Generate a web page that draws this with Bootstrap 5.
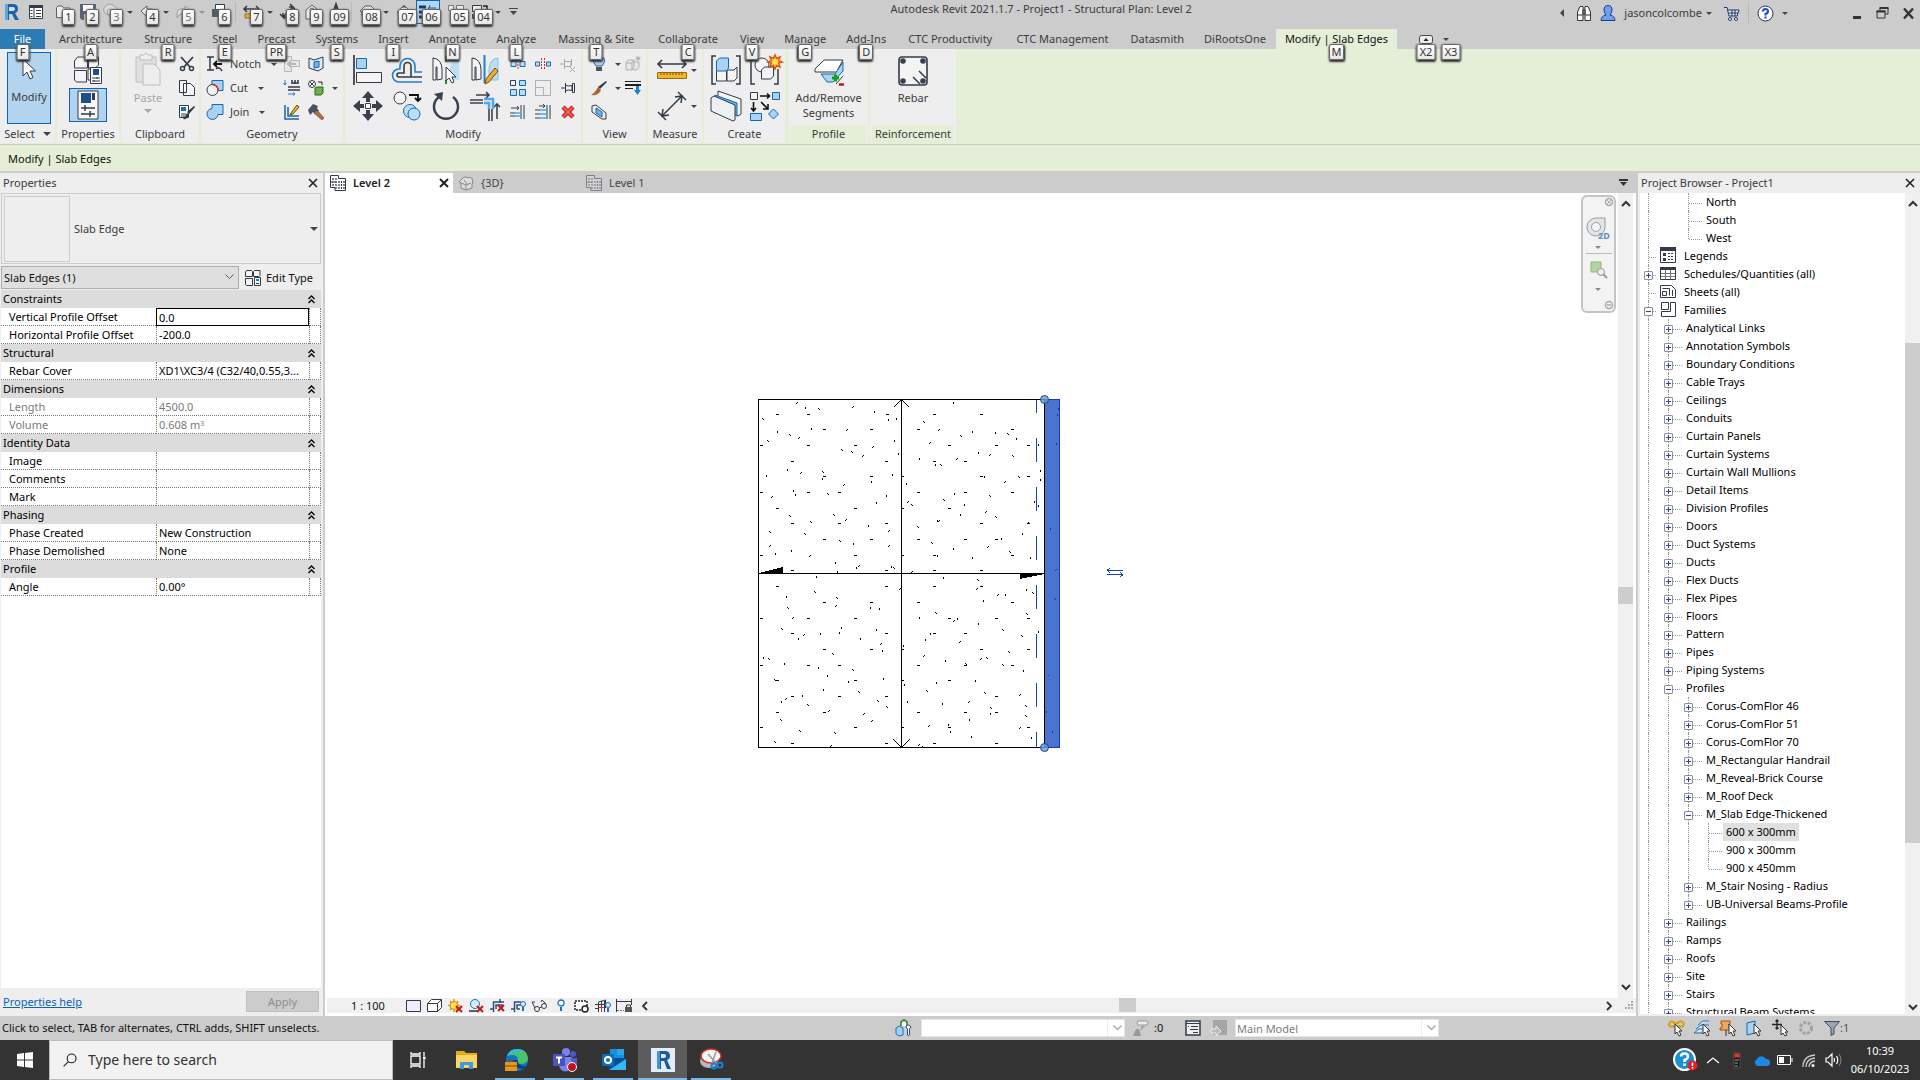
<!DOCTYPE html>
<html lang="en">
<head>
<meta charset="utf-8">
<meta name="viewport" content="width=device-width, initial-scale=1">
<title>Autodesk Revit 2021.1.7 - Project1 - Structural Plan: Level 2</title>
<link href="https://cdn.jsdelivr.net/npm/bootstrap@5.3.0/dist/css/bootstrap.min.css" rel="stylesheet">
<style>
:root{--chrome:#ccc;--panel:#eee;--ctx:#e5efd7;--ink:#3b3b3b;--blue:#0a67b8}
body{font-family:"Noto Sans","Open Sans",sans-serif;font-size:11px;line-height:18px;color:#1e1e1e;background:var(--chrome)}
button,input,select{font:inherit;color:inherit;border:0;background:none;padding:0;border-radius:0;min-width:0}
a{color:inherit;text-decoration:none}
svg{display:block;flex:none;overflow:visible}
.caret-d{width:0;height:0;border:4px solid transparent;border-top-color:#444;border-bottom:0;flex:none}
.caret-d.tiny{border-width:3px 3px 0}
.dim{opacity:.4}
/* title bar */
.titlebar{height:29px;color:var(--ink)}
.qat{height:24px}
.qat button{width:24px;height:24px;position:relative;display:flex;align-items:center;justify-content:center}
.qat .drop{width:12px}
.qat .more{width:18px}
.qat .sel{background:#b4d5f1;outline:1px solid var(--blue);outline-offset:-1px}
.bar-sep{width:1px;height:20px;background:#b8b8b8;margin:2px 4px 2px 3px}
.keytip{position:absolute;left:10px;top:9px;min-width:13px;height:16px;padding:0 2px;line-height:14px;background:linear-gradient(#fff,#e6e6e6);border:1px solid #666;border-radius:2px;box-shadow:0 2px 2px #333,0 0 2px #777;color:#333;text-align:center;z-index:3}
.keytip.wide{left:6px;min-width:19px}
.user-area{height:26px}
.user-area .bar-sep{margin:0}
.user-name{margin-right:-4px}
.win-buttons{height:26px;gap:14px;padding:0 6px 0 65px}
/* ribbon tabs */
.ribbon-tabs{height:20px}
.rtab{position:relative;padding:0 10px;line-height:20px;color:var(--ink);white-space:nowrap}
.tabset{width:1229px;margin-left:2px}
.tabset .rtab{flex:1 1 auto;text-align:center;padding:0 9px}
.tabset .rtab.long{flex-grow:3}
.file-tab{background:#2b7bb4;color:#fff;width:45px;text-align:center;padding:0}
.ctx-tab{background:var(--ctx);width:121px;text-align:center;padding:0;color:#111}
.rtab .keytip{left:50%;top:15px;transform:translateX(-50%)}
.rtab.minrib{margin-left:12px}
.rtab .keytip.x3{left:8px}
/* ribbon */
.ribbon{background:var(--ctx);height:96px;border-bottom:1px solid #c6ccc0;color:var(--ink)}
.rpanel{background:var(--panel);border-right:2px solid var(--ctx);height:94px;display:flex;flex-direction:column}
.rbody{height:76px;padding-top:3px;display:flex;align-items:flex-start}
.rlabel{height:18px;text-align:center;line-height:18px}
.ctx-panel .rlabel{background:var(--ctx);margin:0 2px}
.p57{width:57px}.p64{width:64px}.p80{width:80px}.p144{width:144px}.p238{width:238px}.p65{width:65px}.p56{width:56px}.p83{width:83px}.p88{width:88px}
.rpanel.first-ctx{border-left:2px solid var(--ctx)}
.rbody button{display:flex;align-items:center;justify-content:center}
.rbody .big{flex-direction:column;height:72px;justify-content:flex-start;line-height:15px}
.s24{width:24px;height:24px}
.l39{width:39px;height:36px}
.grid-s{display:grid;grid-template-columns:repeat(3,25px);grid-auto-rows:24px;margin-left:1px}
.grid-l{display:grid;grid-template-columns:repeat(4,39px);grid-auto-rows:36px;margin-left:3px}
.grid-l.two{grid-template-columns:repeat(2,39px);margin-left:2px}
.grid-l button,.grid-s button{width:100%;height:100%}
.modify-btn{width:44px;margin-left:7px;background:#b3d4ef;border:1px solid var(--blue);padding-top:4px}
.prop-btn{width:38px;height:34px;background:#b3d4ef;border:1px solid var(--blue)}
.paste-btn{width:46px}
.geo-list{width:79px;padding-left:4px}
.rbody .gtxt{height:24px;gap:6px;padding-left:1px;justify-content:flex-start}
.optbar{background:var(--ctx);height:26px;padding-left:8px;line-height:28px;color:#111}
/* workspace */
.workspace{padding-top:2px;min-height:0}
.palette{background:var(--panel);color:var(--ink)}
.palette-head{height:20px;line-height:22px;padding:0 5px 0 3px;flex:none}
.props{width:323px}
.typebox{height:71px;margin:0 2px 0 1px;border:1px solid #ccc;padding:2px}
.thumb{width:66px;height:66px;border:1px solid #ccc}
.filter-row{height:26px;padding:2px 0 1px 1px}
.fake-select{appearance:none;-webkit-appearance:none;background:#dfdfdf;border:1px solid #adadad;padding:0 2px;height:23px;width:238px;color:#111}
.sel-wrap{position:relative}
.sel-wrap svg{position:absolute;right:5px;top:8px;pointer-events:none}
.edit-type{gap:5px;margin-left:6px;color:#111}
.prop-area{background:#fff;margin:0 2px 0 1px}
.prop-grid{table-layout:fixed;width:320px;color:#000;border-collapse:separate;border-spacing:0}
.prop-grid .c-name{width:155px}
.prop-grid .c-btn{width:12px}
.prop-grid td,.prop-grid th{padding:0;line-height:17px;height:18px;font-weight:400;white-space:nowrap;overflow:hidden}
.prop-grid .grp th{background:#dcdcdc;padding:0 6px 0 2px;line-height:18px}
.prop-grid .itm th{padding-left:8px;border-bottom:1px dotted #777}
.prop-grid .itm label,.prop-grid .itm output{display:block;height:17px}
.prop-grid .itm td{border-bottom:1px dotted #777;border-left:1px dotted #777;padding-left:2px}
.prop-grid .itm td:last-child{border-right:1px dotted #777}
.prop-grid input{width:100%;display:block;height:17px}
.prop-grid .itm td.edit{padding:0;border:1px solid #000}
.prop-grid td.edit input{padding-left:2px;height:16px}
.prop-grid .ro{color:#7a7a7a}
.prop-grid sup{font-size:7px;line-height:1}
.prop-foot{height:28px;padding:3px 4px 4px 3px}
.prop-foot a{color:#0563c1;text-decoration:underline}
.apply-btn{width:73px;height:21px;background:#ccc;border:1px solid #bfbfbf;color:#8b8b8b}
.viewpane{margin:0 2px;background:#fff;min-width:0}
.viewtabs{height:20px;background:var(--chrome);line-height:22px;color:#444}
.vtab{width:128px;padding-left:5px;gap:7px}
.vtab.act{background:#fff;font-weight:600;color:#222}
.vscroll{width:15px;background:#f0f0f0;margin-right:3px}
.tree-area .vscroll{margin-right:0}
.thumb-bar{background:#cdcdcd}
.thumb-bar.plan-v{height:17px;margin-top:380px}
.thumb-bar.plan-h{width:17px;height:14px;margin-right:6px}
.thumb-bar.tree-v{height:500px;margin-top:136px}
.viewctl{height:15px;background:#f0f0f0;margin:0 0 3px 2px;color:#111;line-height:15px}
.viewctl .ic{width:21px;display:flex;justify-content:center}
.scale{padding-left:24px;width:76px;text-align:left}
.grip{margin:0 3px 0 12px}
.navbox{position:absolute;right:2px;top:2px;width:35px;height:118px;border:2px solid #c4c4c4;border-radius:6px;background:#f3f3f3}
.browser{width:282px}
.tree-area{background:#fff;margin:0 0 2px 2px;color:#000;min-height:0}
.tree{overflow:hidden;min-width:0}
.trow{height:18px;display:flex;white-space:nowrap}
.guide,.node{width:20px;height:18px;position:relative;flex:none}
.node{width:26px}
.node.root{width:20px}
.vl::before{content:"";position:absolute;left:8px;top:0;bottom:0;border-left:1px dotted #999}
.vl.half::before{bottom:8px}
.node::after{content:"";position:absolute;left:9px;right:4px;top:10px;border-top:1px dotted #999}
.box{position:absolute;left:4px;top:6px;width:9px;height:9px;border:1px solid #919191;border-radius:1px;background:#fafafa;z-index:1}
.box::before{content:"";position:absolute;left:1px;top:3px;width:5px;height:1px;background:#2b4a9b}
.box.plus::after{content:"";position:absolute;left:3px;top:1px;width:1px;height:5px;background:#2b4a9b}
.tsel{background:#e0e0e0;margin-left:-3px;padding:0 3px}
/* status bar */
.status{height:24px;color:#111;line-height:24px}
.status .fake-select{background:#fff;border:1px solid #e6e6e6;height:18px;width:204px;line-height:15px;padding:0 1px;color:#7d7d7d}
.status .sel-wrap svg{top:6px;right:3px}
.status .sel-wrap::after{content:"";position:absolute;right:17px;top:1px;height:16px;border-left:1px solid #eee}
.hint{width:895px;padding-left:2px}
.zero{width:36px;padding-left:5px}
.opt-icon{margin:0 8px 0 10px}
.seltools{gap:10px}
.sel-count{width:80px;color:#555}
/* taskbar */
.taskbar{height:40px;background:#333;color:#fff}
.app{width:49px;height:40px;display:flex;align-items:center;justify-content:center;position:relative}
.app.run::after{content:"";position:absolute;left:4px;right:5px;bottom:0;height:2px;background:#76b9ed}
.app.cur{background:#5c5c5c}
.app.cur::after{left:0;right:0}
.search{width:344px;background:#f2f2f2;border:1px solid #bbb;color:#333}
.search input{font-size:14px;width:250px;margin-left:10px}
.search input::placeholder{color:#333;opacity:1}
.tray{margin-right:5px}
.tray-ic{width:24px;display:flex;justify-content:center}
.tray-ic.help{width:28px;justify-content:flex-start}
.clock{width:70px;text-align:center;line-height:18px}
</style>
</head>
<body class="vh-100 d-flex flex-column overflow-hidden">

<header class="titlebar d-flex align-items-start flex-shrink-0">
  <div class="qat d-flex">
    <button aria-label="Revit"><svg width="16" height="18" viewBox="0 0 16 18"><path fill="#1b63a8" d="M1 1h8q5 0 5 5 0 3-3 4l4 7h-4L8 11H5v6H1z"/><path fill="#cfe0ee" d="M5 4h4q2 0 2 2t-2 2H5z"/><path fill="#5ea5dd" d="M1 1h3v16H1z"/></svg></button>
    <button aria-label="Home"><svg width="14" height="14" viewBox="0 0 14 14"><path fill="#fff" stroke="#333b48" d="M.5 .5h13v13H.5z"/><path stroke="#333b48" d="M0 2h14M5 3v11M7 5.500h5M7 8.500h5M7 11.500h5" fill="none"/><path fill="#333b48" d="M0 0h14v3H0z"/><path fill="#333b48" d="M1.500 5h2v1h-2zm0 3h2v1h-2zm0 3h2v1h-2z"/></svg></button>
    <button class="ms-1" aria-label="Open"><svg width="16" height="14" viewBox="0 0 16 14"><path fill="#eee" stroke="#555d68" d="M.5 12.500V2.500L2 1h4l1.500 2H14v3l-3 7z"/></svg><span class="keytip">1</span></button>
    <button aria-label="Save"><svg width="16" height="16" viewBox="0 0 16 16"><path fill="#5a6370" d="M0 0h16v16H2l-2-2z"/><path fill="#fff" d="M3 1h10v6H3z"/><path fill="#b9c2cc" d="M4 10h8v6H4z"/></svg><span class="keytip">2</span></button>
    <button aria-label="Synchronize"><svg class="dim" width="18" height="16" viewBox="0 0 18 16"><path fill="#eee" stroke="#666" d="M1 8a6 6 0 0 1 10-6l5 4v6l-6 3z"/><circle cx="7" cy="8" r="3" fill="none" stroke="#666"/></svg><span class="keytip text-secondary">3</span></button>
    <button class="drop" aria-label="Synchronize menu"><span class="caret-d tiny"></span></button>
    <button aria-label="Undo"><svg width="16" height="14" viewBox="0 0 16 14"><path fill="#eee" stroke="#555d68" d="M1 6l6-5v3h4q4 0 4 5v4q-2-4-4-4H7v3z"/></svg><span class="keytip">4</span></button>
    <button class="drop" aria-label="Undo menu"><span class="caret-d tiny"></span></button>
    <button aria-label="Redo"><svg class="dim" width="16" height="14" viewBox="0 0 16 14"><path fill="#eee" stroke="#555d68" d="M15 6L9 1v3H5Q1 4 1 9v4q2-4 4-4h4v3z"/></svg><span class="keytip text-secondary">5</span></button>
    <button class="drop" aria-label="Redo menu"><span class="caret-d tiny dim"></span></button>
    <button aria-label="Print"><svg width="16" height="16" viewBox="0 0 16 16"><path fill="#fff" stroke="#333b48" d="M3.500 .5h9v5h-9z"/><path fill="#555d68" d="M0 5h16v8H0z"/></svg><span class="keytip">6</span></button>
    <span class="bar-sep"></span>
    <button aria-label="Measure"><svg width="16" height="14" viewBox="0 0 16 14"><path fill="none" stroke="#333b48" stroke-width="1.500" d="M0 4h15M3 1L0 4l3 3M12 1l3 3-3 3"/><path fill="#f0b030" stroke="#a36a00" d="M1 9h13v4H1z"/></svg><span class="keytip">7</span></button>
    <button class="drop" aria-label="Measure menu"><span class="caret-d tiny"></span></button>
    <button aria-label="Aligned Dimension"><svg width="16" height="16" viewBox="0 0 16 16"><path fill="none" stroke="#333b48" stroke-width="1.500" d="M3 13L13 3M10 0l5 5M0 10l5 5M3 9v4h4M9 3h4v4"/></svg><span class="keytip">8</span></button>
    <button aria-label="Tag by Category"><svg width="16" height="16" viewBox="0 0 16 16"><path fill="#eee" stroke="#555d68" d="M2 15V6l6-5 6 5v9z"/><circle cx="8" cy="6" r="2" fill="#fff" stroke="#555d68"/></svg><span class="keytip">9</span></button>
    <button aria-label="Text"><svg width="14" height="16" viewBox="0 0 14 16"><path fill="none" stroke="#333b48" stroke-width="3" d="M2 16L7 2l5 14M4 11h6"/></svg><span class="keytip wide">09</span></button>
    <span class="bar-sep"></span>
    <button aria-label="Default 3D View"><svg width="18" height="16" viewBox="0 0 18 16"><path fill="#eee" stroke="#555d68" d="M1 7l5-5 6 0 5 5-3 1v6H5L3 12V8z"/></svg><span class="keytip wide">08</span></button>
    <button class="drop" aria-label="3D menu"><span class="caret-d tiny"></span></button>
    <button aria-label="Section"><svg width="16" height="16" viewBox="0 0 16 16"><path fill="#333b48" d="M8 1l7 7-3 4-8 0-3-4z"/><circle cx="8" cy="8" r="5" fill="#fff" stroke="#555d68"/></svg><span class="keytip wide">07</span></button>
    <button class="sel" aria-label="Thin Lines"><svg width="18" height="14" viewBox="0 0 18 14"><path fill="none" stroke="#173a63" stroke-width="3" d="M0 2h7M0 7h6M0 12h6"/><path fill="none" stroke="#0a67b8" d="M9 3h8M8 8l3-8"/></svg><span class="keytip wide">06</span></button>
    <span class="ms-1"></span>
    <button aria-label="Close Inactive"><svg width="16" height="14" viewBox="0 0 16 14"><path fill="#eee" stroke="#777" d="M.5 .5h5v5h-5zM8.500 .5h7v6h-7zM4.500 8.500h11v5h-11z"/></svg><span class="keytip wide">05</span></button>
    <button aria-label="Switch Windows"><svg width="16" height="14" viewBox="0 0 16 14"><path fill="#eee" stroke="#333b48" d="M.5 .5h9v6h-9zM6.500 6.500h9v7h-9z"/><path fill="none" stroke="#222" stroke-width="1.500" d="M11 1h4v4M1 9v4h4"/></svg><span class="keytip wide">04</span></button>
    <button class="drop" aria-label="Windows menu"><span class="caret-d tiny"></span></button>
    <button class="more" aria-label="Customize"><svg width="9" height="8" viewBox="0 0 9 8"><path fill="#444" d="M0 0h9v1H0zM1 3h7L4.500 7z"/></svg></button>
  </div>
  <div class="flex-fill text-center">Autodesk Revit 2021.1.7 - Project1 - Structural Plan: Level 2</div>
  <div class="user-area d-flex align-items-center gap-2">
    <svg width="4" height="8"><path fill="#444" d="M4 0v8L0 4z"/></svg>
    <svg class="ms-1" width="16" height="16" viewBox="0 0 16 16"><path fill="#fff" stroke="#333" d="M1.500 15.500V7L4 1.500h3V15.500zM14.500 15.500V7L12 1.500H9V15.500zM7 5h2v4H7zM1.500 10h5.500M9 10h5.500"/></svg>
    <svg width="16" height="16" viewBox="0 0 16 16"><path fill="#6fa0ee" stroke="#1f3d8c" d="M8 .5q4 0 4 4.500 0 3-2 5 5 1 5 5.500H1Q1 11 6 10 4 8 4 5 4 .5 8 .5z"/></svg>
    <span class="user-name">jasoncolcombe</span><span class="caret-d tiny"></span>
    <svg class="ms-1" width="16" height="15" viewBox="0 0 16 15"><path fill="#eee" stroke="#1d3566" d="M0 1.500h3l2 8.500h8l2-6H4M5 7h9M8 4v6M11 4v6"/><circle cx="6" cy="13" r="1.500" fill="#fff" stroke="#1d3566"/><circle cx="12" cy="13" r="1.500" fill="#fff" stroke="#1d3566"/></svg>
    <span class="bar-sep"></span>
    <svg width="17" height="17" viewBox="0 0 17 17"><circle cx="8.500" cy="8.500" r="7.500" fill="#fff" stroke="#222d55"/><path fill="none" stroke="#1f4fc0" stroke-width="2.200" d="M6 6.500Q6 4 8.500 4T11 6.500Q11 8 8.500 9v1.500M8.500 11.500v2"/></svg>
    <span class="caret-d tiny"></span>
  </div>
  <div class="win-buttons d-flex align-items-center">
    <button aria-label="Minimize"><svg width="9" height="14"><path fill="#333" d="M0 10h8v3H0z"/></svg></button>
    <button aria-label="Restore"><svg width="13" height="12" viewBox="0 0 13 12"><path fill="none" stroke="#333" d="M4 3V1h8v6H9M1 4h8v7H1z"/><path stroke="#333" stroke-width="2" d="M3.500 1h9M.5 4.500h9"/></svg></button>
    <button aria-label="Close"><svg width="11" height="11" viewBox="0 0 11 11"><path stroke="#333" stroke-width="2.400" d="M1 .5l9 10M10 .5l-9 10"/></svg></button>
  </div>
</header>

<nav class="ribbon-tabs d-flex flex-shrink-0">
  <a href="#" class="rtab file-tab">File<span class="keytip">F</span></a>
  <div class="tabset d-flex">
    <a href="#" class="rtab long">Architecture<span class="keytip">A</span></a>
    <a href="#" class="rtab">Structure<span class="keytip">R</span></a>
    <a href="#" class="rtab">Steel<span class="keytip">E</span></a>
    <a href="#" class="rtab">Precast<span class="keytip wide">PR</span></a>
    <a href="#" class="rtab">Systems<span class="keytip">S</span></a>
    <a href="#" class="rtab">Insert<span class="keytip">I</span></a>
    <a href="#" class="rtab">Annotate<span class="keytip">N</span></a>
    <a href="#" class="rtab">Analyze<span class="keytip">L</span></a>
    <a href="#" class="rtab long">Massing &amp; Site<span class="keytip">T</span></a>
    <a href="#" class="rtab long">Collaborate<span class="keytip">C</span></a>
    <a href="#" class="rtab">View<span class="keytip">V</span></a>
    <a href="#" class="rtab">Manage<span class="keytip">G</span></a>
    <a href="#" class="rtab">Add-Ins<span class="keytip">D</span></a>
    <a href="#" class="rtab long">CTC Productivity</a>
    <a href="#" class="rtab long">CTC Management</a>
    <a href="#" class="rtab">Datasmith</a>
    <a href="#" class="rtab">DiRootsOne</a>
  </div>
  <a href="#" class="rtab ctx-tab">Modify | Slab Edges<span class="keytip">M</span></a>
  <button class="rtab d-flex align-items-center minrib" aria-label="Minimize ribbon"><svg width="14" height="9" viewBox="0 0 14 9"><rect x=".5" y=".5" width="13" height="8" rx="2" fill="#eee" stroke="#444"/><path fill="#222" d="M4.500 6h5L7 3z"/></svg><span class="keytip wide">X2</span></button>
  <button class="rtab p-0 d-flex align-items-center" aria-label="Ribbon options"><span class="caret-d tiny"></span><span class="keytip wide x3">X3</span></button>
</nav>

<section class="ribbon d-flex flex-shrink-0">
  <div class="rpanel p57"><div class="rbody">
    <button class="big modify-btn"><svg width="14" height="24" viewBox="0 0 14 24"><path fill="#fff" stroke="#333b48" d="M1 2v17l4-4 3 7 3-1.500L8 14h5.500z"/></svg><span class="pt-2">Modify</span></button></div>
    <div class="rlabel d-flex align-items-center justify-content-center gap-2">Select <span class="caret-d"></span></div></div>
  <div class="rpanel p64"><div class="rbody flex-column align-items-center">
    <button class="l39" aria-label="Type Properties"><svg width="30" height="30" viewBox="0 0 30 30"><path fill="#f4f4f4" stroke="#333b48" d="M1.500 6l3-4h8l2 2v9h-13zM15.500 4l2-2h8v8l-3 3h-7zM1.500 15.500h12V27h-10l-2-2zM15 14h5v11h-5z"/><path fill="#fff" stroke="#333b48" d="M17.500 12.500h11v16h-11z"/><path fill="#1c4f8e" d="M20 14h6v6h-6z"/><path stroke="#333b48" d="M19 23h8M19 26h8M24 22v2M21 25v2"/></svg></button>
    <button class="prop-btn" aria-label="Properties"><svg width="22" height="30" viewBox="0 0 22 30"><path fill="#f8f8f8" stroke="#333b48" d="M1 1h20v28H1z"/><path fill="#1c4f8e" d="M4 3h10v10H4z"/><path fill="#333b48" d="M15 3h3v7h-3z"/><path stroke="#333b48" stroke-width="1.500" d="M4 18h14M4 24h14M8 15v6M13 21v6"/></svg></button></div>
    <div class="rlabel">Properties</div></div>
  <div class="rpanel p80"><div class="rbody">
    <button class="big dim mx-1 paste-btn"><svg width="26" height="34" viewBox="0 0 26 34"><path fill="#ccc" stroke="#777" d="M1 5h20v25H1z"/><path fill="#eee" stroke="#777" d="M5 8V3h4q2-4 4 0h4v5zM8 12h11l6 6v15H8z"/></svg><span class="pt-1">Paste</span><span class="caret-d mt-1"></span></button>
    <div>
      <button class="s24" aria-label="Cut"><svg width="16" height="16" viewBox="0 0 16 16"><path stroke="#333b48" stroke-width="1.800" d="M2 1l9 10M14 1L5 11"/><circle cx="3.500" cy="12.500" r="2" fill="none" stroke="#333b48" stroke-width="1.500"/><circle cx="12.500" cy="12.500" r="2" fill="none" stroke="#333b48" stroke-width="1.500"/></svg></button>
      <button class="s24" aria-label="Copy"><svg width="16" height="16" viewBox="0 0 16 16"><path fill="#f5f5f5" stroke="#333b48" d="M.5 .5h7v12h-7zM4.500 3.500h7l4 4v8h-11z"/></svg></button>
      <button class="s24" aria-label="Match Type"><svg width="16" height="16" viewBox="0 0 16 16"><path fill="#fff" stroke="#333b48" d="M.5 1.500h9v12h-9z"/><path fill="#1f6fc0" d="M2 3h5v4H2z"/><path stroke="#333b48" d="M2 10h5M2 12h4"/><path fill="#333b48" d="M15 2l1 1-6 7-2-2zM8 9l2 2q-2 5-6 4 2-2 4-6z"/></svg></button>
    </div></div><div class="rlabel">Clipboard</div></div>
  <div class="rpanel p144"><div class="rbody">
    <div class="geo-list">
      <button class="gtxt"><svg width="18" height="16" viewBox="0 0 18 16"><path fill="none" stroke="#333b48" stroke-width="1.500" d="M1 1h7M4 1v13M1 14h7M12 3h5M10 13q3-3 6 2"/><path fill="none" stroke="#111" stroke-width="1.800" d="M16 8H8M11 5L8 8l3 3"/></svg><span>Notch</span><span class="caret-d tiny ms-1"></span></button>
      <button class="gtxt"><svg width="18" height="16" viewBox="0 0 18 16"><path fill="#a8d3f2" stroke="#1468b0" d="M6 .5h11v10H6z"/><circle cx="6.500" cy="10" r="5.500" fill="#f4f4f4" stroke="#333b48"/><path fill="none" stroke="#d22" stroke-width="1.500" d="M6.500 4.500a5.500 5.500 0 0 1 5.500 6"/></svg><span>Cut</span><span class="caret-d tiny ms-1"></span></button>
      <button class="gtxt"><svg width="18" height="16" viewBox="0 0 18 16"><path fill="#a8d3f2" stroke="#1468b0" d="M6 .5h11v10h-5a5.500 5.500 0 1 1-6-6z"/></svg><span>Join</span><span class="caret-d tiny ms-1"></span></button>
    </div>
    <div>
      <button class="s24 dim" aria-label="Wall Joins"><svg width="16" height="16" viewBox="0 0 16 16"><path fill="#ddd" stroke="#666" d="M.5 .5h7v4h8v6h-8v5h-7z"/><path fill="none" stroke="#666" stroke-width="2" d="M5 8h7M7 5L4 8l3 3"/></svg></button>
      <button class="s24" aria-label="Beam Joins"><svg width="16" height="16" viewBox="0 0 16 16"><path stroke="#333b48" stroke-width="1.500" d="M4 7h12M4 10h12M8 3h6M8 0v4M14 0v4M11 0v4"/><path fill="none" stroke="#1f7fd4" d="M1 0v5M-.5 3L1 5l1.500-2M4 14h7M9 12.500l2 1.500-2 1.500"/></svg></button>
      <button class="s24" aria-label="Split Face"><svg width="16" height="16" viewBox="0 0 16 16"><path fill="none" stroke="#1468b0" stroke-width="1.500" d="M1 1v14h14M4 3v9h11"/><path fill="#f0b030" stroke="#7a4a00" d="M7 9l6-8 2 2-6 7-3 1z"/></svg></button>
    </div>
    <div>
      <button class="s24" aria-label="Wall Opening"><svg width="16" height="16" viewBox="0 0 16 16"><path fill="#dfe9f2" stroke="#333b48" d="M1 2l5 2 9-3v11l-5 3-9-3z"/><path fill="#6db4ec" stroke="#1468b0" d="M6 6l5-1v6l-5 1z"/></svg></button>
      <button class="s24" aria-label="Demolish"><svg width="16" height="16" viewBox="0 0 16 16"><circle cx="4" cy="4" r="3.500" fill="#fff" stroke="#333b48"/><path stroke="#333b48" d="M2 2l4 4M6 2L2 6"/><path fill="none" stroke="#222" d="M10 2h4v3"/><path fill="#6bb04a" stroke="#2c6315" d="M7 8l2-1h6v6l-2 2H7z"/></svg></button>
      <button class="s24" aria-label="Paint"><svg width="16" height="16" viewBox="0 0 16 16"><path fill="#4a525e" d="M0 6l5-6 5 2-1 2 2 3-4 3-2-2-3 3z"/><path fill="#b06a50" stroke="#6e3d2c" stroke-width=".6" d="M9 6l7 8-2 2-8-7z"/></svg></button>
    </div><span class="caret-d tiny align-self-center ms-1"></span></div>
    <div class="rlabel">Geometry</div></div>
  <div class="rpanel p238"><div class="rbody">
    <div class="grid-l">
      <button aria-label="Align"><svg width="30" height="30" viewBox="0 0 30 30"><path stroke="#222" stroke-width="1.500" d="M1 0v30"/><path fill="#a8d3f2" stroke="#1468b0" d="M3.500 3.500h10v10h-10z"/><path fill="#f4f4f4" stroke="#333b48" d="M3.500 17.500h25v10h-25z"/></svg></button>
      <button aria-label="Offset"><svg width="30" height="30" viewBox="0 0 30 30"><path fill="none" stroke="#1f7fd4" stroke-width="1.600" d="M30 27H7a6.500 6.500 0 0 1 0-13h1V11a7.500 7.500 0 0 1 15 0v6h7"/><path fill="none" stroke="#333b48" stroke-width="1.600" d="M30 22H7a1.500 1.500 0 0 1 0-4h5v-7a3.500 3.500 0 0 1 7 0v11"/></svg></button>
      <button aria-label="Mirror - Pick Axis"><svg width="30" height="30" viewBox="0 0 30 30"><path fill="#f4f4f4" stroke="#333b48" d="M2 3q9 1 9 12v9L6 25V12H5v13H2z"/><path stroke="#1d9a2a" stroke-width="2" d="M15 1v6m0 18v4"/><path fill="#b9def5" d="M28 3q-9 1-9 12v10h9z"/><path fill="#fff" stroke="#333b48" d="M15 12v14l3-3 3 5 2-1-2-5h4z"/></svg></button>
      <button aria-label="Mirror - Draw Axis"><svg width="30" height="30" viewBox="0 0 30 30"><path fill="#f4f4f4" stroke="#333b48" d="M2 3q9 1 9 12v9L6 25V12H5v13H2z"/><path stroke="#1f7fd4" stroke-width="2" d="M14.500 0v28"/><path fill="#b9def5" stroke="#7fc0ea" d="M28 3q-9 1-9 12v10h9z"/><path fill="#f0a830" stroke="#7a4a00" d="M16 24L25 13l3 3-9 11-4 2z"/></svg></button>
      <button aria-label="Move"><svg width="30" height="30" viewBox="0 0 30 30"><path fill="#39414e" d="M15 0l6 7h-4v4h-4V7H9zM15 30l6-7h-4v-4h-4v4H9zM0 15l7-6v4h4v4H7v4zM30 15l-7-6v4h-4v4h4v4z"/><path fill="#fff" stroke="#39414e" d="M12.500 12.500h5v5h-5z"/></svg></button>
      <button aria-label="Copy Element"><svg width="30" height="30" viewBox="0 0 30 30"><circle cx="8" cy="7" r="6" fill="#f4f4f4" stroke="#333b48"/><path fill="none" stroke="#111" stroke-width="1.800" d="M17 4h9v6M23 7l3 3 3-3"/><circle cx="18" cy="20" r="6.500" fill="#b9def5" stroke="#1468b0"/><circle cx="22" cy="23" r="6" fill="#b9def5" stroke="#1468b0"/></svg></button>
      <button aria-label="Rotate"><svg width="30" height="30" viewBox="0 0 30 30"><path fill="none" stroke="#39414e" stroke-width="2.500" d="M8 6a12 12 0 1 0 14 0"/><path fill="#39414e" d="M3 3l9-2-1 9z"/></svg></button>
      <button aria-label="Trim"><svg width="30" height="30" viewBox="0 0 30 30"><path fill="none" stroke="#39414e" stroke-width="1.600" d="M6 4h13M16 1l3 3-3 3M0 9h13M0 12h13M27 28V13M24 16l3-3 3 3M22 30V18M19 30V18"/><path fill="none" stroke="#4ba7ee" stroke-width="2.500" d="M14 8h9v10M14 12h5v6"/></svg></button>
    </div>
    <div class="grid-s">
      <button aria-label="Split"><svg width="16" height="16" viewBox="0 0 16 16"><path fill="#b9def5" stroke="#1468b0" d="M1 5.500h5v5H1zM10 5.500h5v5h-5z"/><path stroke="#d22" stroke-dasharray="2 1" d="M8 2v12"/></svg></button>
      <button aria-label="Split with Gap"><svg width="16" height="16" viewBox="0 0 16 16"><path fill="#b9def5" stroke="#1468b0" d="M.5 6h4v4h-4zM11.500 6h4v4h-4z"/><path stroke="#d22" stroke-dasharray="2 1" d="M6.500 2v12M9.500 2v12"/></svg></button>
      <button class="dim" aria-label="Unpin"><svg width="16" height="16" viewBox="0 0 16 16"><path fill="none" stroke="#444" d="M0 8h4M4.500 3v10M5 5.500h6v5H5M11.500 3v6M10 11l5 5M15 11l-5 5"/></svg></button>
      <button aria-label="Array"><svg width="16" height="16" viewBox="0 0 16 16"><path fill="#f4f4f4" stroke="#333b48" d="M.5 .5h5v5h-5z"/><path fill="#b9def5" stroke="#1468b0" d="M9.500 .5h6v5h-6zM.5 9.500h6v6h-6zM9.500 9.500h6v6h-6z"/></svg></button>
      <button class="dim" aria-label="Scale"><svg width="16" height="16" viewBox="0 0 16 16"><path fill="none" stroke="#555" d="M.5 .5h15v15H.5zM.5 7.500h8v8h-8z"/></svg></button>
      <button aria-label="Pin"><svg width="14" height="12" viewBox="0 0 14 12"><path fill="none" stroke="#333b48" d="M0 6h4M4.500 1v10M5 3.500q3 1 6 0v5q-3-1-6 0M11.500 1.500h2v9h-2z"/></svg></button>
      <button aria-label="Trim Single"><svg width="16" height="16" viewBox="0 0 16 16"><path fill="none" stroke="#333b48" d="M1 4h8M7 2l2 2-2 2M11 1v14M14 1v14M0 9h5M0 12h5"/><path stroke="#4ba7ee" stroke-width="1.500" d="M5 9h6M5 12h6"/></svg></button>
      <button aria-label="Trim Multiple"><svg width="16" height="16" viewBox="0 0 16 16"><path fill="none" stroke="#333b48" d="M4 2h6M8 0l2 2-2 2M12 1v14M15 1v14M0 6h5M0 10h5M0 14h5"/><path stroke="#4ba7ee" stroke-width="1.500" d="M5 6h7M5 10h7M5 14h7"/></svg></button>
      <button aria-label="Delete"><svg width="14" height="14" viewBox="0 0 14 14"><path stroke="#b01010" stroke-width="4.500" d="M2 2l10 10M12 2L2 12"/><path stroke="#ee5a4a" stroke-width="2.500" d="M2 2l10 10M12 2L2 12"/></svg></button>
    </div></div><div class="rlabel">Modify</div></div>
  <div class="rpanel p65"><div class="rbody">
    <div class="ms-1">
      <div class="d-flex align-items-center gap-1"><button class="s24" aria-label="Hide"><svg width="12" height="16" viewBox="0 0 12 16"><path fill="#a9cdf3" stroke="#3a5f9a" d="M3 10Q-1 6 1 2q5-3 10 0 2 4-2 8z"/><path fill="#555" d="M3 11h6v4H3z"/></svg></button><span class="caret-d tiny"></span></div>
      <div class="d-flex align-items-center gap-1"><button class="s24" aria-label="Linework"><svg width="16" height="14" viewBox="0 0 16 14"><path fill="#333b48" d="M15 0l1 1-7 7-2-2z"/><path fill="#b0622a" d="M7 6l3 3q-2 6-10 5 4-2 7-8z"/></svg></button><span class="caret-d tiny"></span></div>
      <button class="s24" aria-label="Cut Profile"><svg width="16" height="16" viewBox="0 0 16 16"><path fill="#eee" stroke="#333b48" d="M1 2l4-1 10 8v6l-4 0L1 8z"/><path fill="#6db4ec" stroke="#1468b0" d="M5 4l6 4v5L5 9z"/></svg></button>
    </div>
    <div><button class="s24 dim" aria-label="Displace"><svg width="16" height="16" viewBox="0 0 16 16"><path fill="#ddd" stroke="#555" d="M1 7h6v7H1zM1 7l2-3h6v7l-2 3M7 7l2-3M8 14h4l2-3V6h-5"/><path stroke="#555" d="M13 0v5M10.500 2.500h5M11 .5l4 4M15 .5l-4 4"/></svg></button>
    <button class="s24" aria-label="Override"><svg width="16" height="14" viewBox="0 0 16 14"><path stroke="#222" d="M0 .5h16M0 7.500h8"/><path stroke="#222" stroke-width="2" d="M0 4h16"/><path fill="#1f7fd4" d="M11 5h3v4h2l-3.500 5L9 9h2z"/></svg></button></div>
  </div><div class="rlabel">View</div></div>
  <div class="rpanel p56"><div class="rbody">
    <div class="ms-1">
      <div class="d-flex align-items-center"><button class="l39" aria-label="Measure"><svg width="30" height="20" viewBox="0 0 30 20"><path fill="none" stroke="#333b48" stroke-width="1.600" d="M1 4h28M5 0L1 4l4 4M25 0l4 4-4 4"/><path fill="#f2b632" stroke="#9c6a0a" d="M.5 12.500h29v6H.5z"/><path stroke="#7a4a00" d="M4 13v2m3-2v2m3-2v2m3-2v2m3-2v2m3-2v2m3-2v2m3-2v2"/></svg></button><span class="caret-d tiny"></span></div>
      <div class="d-flex align-items-center"><button class="l39" aria-label="Dimension"><svg width="30" height="30" viewBox="0 0 30 30"><path fill="none" stroke="#333b48" stroke-width="1.500" d="M5 25L25 5M1 21l8 8M21 1l8 8M18 6l7-1-1 7M6 18l-1 7 7-1"/></svg></button><span class="caret-d tiny"></span></div>
    </div></div><div class="rlabel">Measure</div></div>
  <div class="rpanel p83"><div class="rbody"><div class="grid-l two">
      <button aria-label="Create Assembly"><svg width="30" height="30" viewBox="0 0 30 30"><path fill="none" stroke="#333b48" stroke-width="1.500" d="M5 1H1v28h4M25 1h4v28h-4"/><path fill="#f4f4f4" stroke="#333b48" d="M5.500 15h10v11h-10zM16 15h7l3-3v11l-3 3h-7z"/><path fill="#a8d3f2" stroke="#1468b0" d="M5.500 6l3-3h9v10l-2 3h-10z"/></svg></button>
      <button aria-label="Create Parts"><svg width="30" height="30" viewBox="0 0 30 30"><path fill="none" stroke="#333b48" stroke-width="1.500" d="M5 1H1v28h4M28 14v15h-4"/><circle cx="12" cy="10" r="7" fill="#f4f4f4" stroke="#333b48"/><path fill="#f4f4f4" stroke="#333b48" d="M11.500 15l3-3h9v9l-3 3h-9z"/><path fill="#ffe14a" stroke="#e0560a" stroke-width="1.500" d="M25 0l1.500 3.500L30 2l-1.500 3.500L32 7l-3.500 1L30 12l-3.500-1.500L25 14l-1.500-3.500L20 12l1.500-4L18 7l3.500-1.500L20 2l3.500 1.500z"/></svg></button>
      <button aria-label="Create Group"><svg width="32" height="32" viewBox="0 0 32 32"><path fill="#f4f4f4" stroke="#333b48" d="M8 1l23 8v15l-3 2L8 12z"/><path fill="#6db4ec" stroke="#1468b0" d="M5 5l22 8v13L5 16z"/><path fill="#eef1f4" stroke="#333b48" d="M1 8l3-2 21 9v15l-2 1L1 21z"/></svg></button>
      <button aria-label="Create Similar"><svg width="30" height="30" viewBox="0 0 30 30"><path fill="#f4f4f4" stroke="#333b48" d="M.5 1.500h7v7h-7z"/><path fill="#a8d3f2" stroke="#1468b0" d="M22.500 1.500h7v7h-7zM.5 22.500h11v7H.5zM23.500 18l5 5-5 5-5-5z"/><path fill="none" stroke="#111" stroke-width="1.600" d="M10 5h9M17 2.500L19.500 5 17 7.500M3.500 11v9M1 17l2.500 3L6 17M11 11l7 7M18 13v5h-5"/></svg></button>
    </div></div><div class="rlabel">Create</div></div>
  <div class="rpanel ctx-panel p83 first-ctx"><div class="rbody justify-content-center">
    <button class="big"><svg class="my-1" width="30" height="30" viewBox="0 0 30 30"><path fill="#fff" stroke="#333b48" d="M1 13L10 4h19l-5 9v3H1z"/><path fill="#a8d3f2" stroke="#1468b0" d="M7 18h14l8-12v9L19 26h-6z"/><path stroke="#11a01a" stroke-width="3" d="M18 22h7M21.500 18.500v7"/><path stroke="#333b48" d="M29 20l-7 8"/><path stroke="#c01818" stroke-width="2.500" d="M25 28.500h5"/></svg><span>Add/Remove</span><span>Segments</span></button></div>
    <div class="rlabel">Profile</div></div>
  <div class="rpanel ctx-panel p88"><div class="rbody justify-content-center">
    <button class="big"><svg class="my-1" width="30" height="30" viewBox="0 0 30 30"><rect x="1" y="1" width="28" height="28" rx="3" fill="#f4f4f4" stroke="#333b48" stroke-width="1.600"/><g fill="#39414e"><circle cx="5" cy="5" r="2.800"/><circle cx="25" cy="5" r="2.800"/><circle cx="5" cy="25" r="2.800"/><circle cx="25" cy="25" r="2.800"/></g><path stroke="#333b48" stroke-width="1.500" d="M15 21l7 7M21 15l7 7"/></svg><span>Rebar</span></button></div>
    <div class="rlabel">Reinforcement</div></div>
</section>
<div class="optbar flex-shrink-0">Modify | Slab Edges</div>

<main class="workspace d-flex flex-fill overflow-hidden">
  <aside class="palette props d-flex flex-column flex-shrink-0">
    <div class="palette-head d-flex justify-content-between align-items-center"><span>Properties</span><button aria-label="Close properties"><svg width="10" height="10" viewBox="0 0 10 10"><path stroke="#222" stroke-width="1.600" d="M1 1l8 8M9 1L1 9"/></svg></button></div>
    <div class="typebox d-flex align-items-center"><div class="thumb"></div><span class="ms-1 flex-fill">Slab Edge</span><span class="caret-d"></span></div>
    <div class="filter-row d-flex align-items-center">
      <span class="sel-wrap d-flex"><select class="fake-select" aria-label="Element filter"><option>Slab Edges (1)</option></select><svg width="9" height="6" viewBox="0 0 9 6"><path fill="none" stroke="#555" d="M.5 .5l4 4 4-4"/></svg></span>
      <button class="edit-type d-flex align-items-center"><svg width="16" height="16" viewBox="0 0 16 16"><path fill="#f4f4f4" stroke="#333b48" d="M.5 2l1-1.500h5l1 1v5h-7zM8.500 1.500l1-1h5.500v5l-1 1H8.500zM.5 8.500h7v7h-6l-1-1z"/><path fill="#fff" stroke="#333b48" d="M9.500 7.500h6v8h-6z"/><path fill="#1f7fd4" d="M11 9h3v2h-3z"/><path stroke="#333b48" d="M11 13.500h3"/></svg>Edit Type</button>
    </div>
    <div class="prop-area flex-fill">
      <table class="prop-grid"><colgroup><col class="c-name"><col><col class="c-btn"></colgroup><tbody id="props"></tbody></table>
    </div>
    <div class="prop-foot d-flex justify-content-between align-items-center"><a href="#">Properties help</a><button class="apply-btn" disabled>Apply</button></div>
  </aside>

  <section class="viewpane d-flex flex-column flex-fill">
    <div class="viewtabs d-flex flex-shrink-0">
      <div class="vtab act d-flex align-items-center"><svg width="16" height="16" viewBox="0 0 16 16"><path fill="#fff" stroke="#333b48" d="M.5 .5h8v3h7v12H5v-3H.5z"/><path stroke="#333b48" stroke-width="1.200" stroke-dasharray="2 1" d="M3 3v8M6 3v11M9 6v9M11.500 6v9M14 6v9M1 7h5"/></svg><span class="flex-fill">Level 2</span><button class="pe-1" aria-label="Close Level 2"><svg width="10" height="10" viewBox="0 0 10 10"><path stroke="#222" stroke-width="2" d="M1 1l8 8M9 1L1 9"/></svg></button></div>
      <div class="vtab d-flex align-items-center"><svg width="16" height="14" viewBox="0 0 16 14"><path fill="#ddd" stroke="#888" d="M1 6l5-5 8 1 1 5-1 1v4l-6 2-5-2V7z"/><path fill="none" stroke="#888" d="M3 7l5 2 5-2M8 9v5M9 8l-3-4"/></svg><span>{3D}</span></div>
      <div class="vtab d-flex align-items-center"><svg class="opacity-50" width="16" height="16" viewBox="0 0 16 16"><path fill="#ddd" stroke="#333b48" d="M.5 .5h8v3h7v12H5v-3H.5z"/><path stroke="#333b48" stroke-width="1.200" stroke-dasharray="2 1" d="M3 3v8M6 3v11M9 6v9M11.500 6v9M14 6v9M1 7h5"/></svg><span>Level 1</span></div>
      <button class="ms-auto px-1 me-1" aria-label="Tab list"><svg width="9" height="8" viewBox="0 0 9 8"><path fill="#333" d="M0 0h9v2H0zM1 3h7L4.500 7z"/></svg></button>
    </div>
    <div class="d-flex flex-fill overflow-hidden">
      <div class="flex-fill position-relative">
        <svg width="100%" height="100%" viewBox="325 193 1293 805" shape-rendering="crispEdges">
          <g transform="translate(740 380) scale(.33333)">
            <path id="marks" fill="none" stroke="#000" stroke-width="3"/>
          </g>
          <path fill="none" stroke="#000" d="M758.500 399.500h286v348h-286zM901.500 399.500v348M758.500 573.500h286M893.500 407.500l8-8 8 8M893.500 739.500l8 8 8-8"/>
          <path d="M759 573l24-6v6zM1020 574h24l-24 5z"/>
          <path stroke="#0f45bd" stroke-dasharray="24 25" stroke-dashoffset="11" d="M1036.500 400v347"/>
          <path fill="#4b74d1" stroke="#0f3fc0" d="M1044.500 399.500h15v348h-15z"/>
          <g transform="translate(740 380) scale(.33333)"><path stroke="#0a36c0" stroke-width="3" d="M955 84v6M953 102v6M949 189v6M931 444v6M946 574l3-6M943 655l4 5M925 889l4-5M921 993v6M936 1059l4-6"/></g>
          <path stroke="#000" d="M1044.500 399v348"/>
          <g fill="#5f9df0" fill-opacity=".8" stroke="#345" shape-rendering="auto"><circle cx="1044.500" cy="399.500" r="4"/><circle cx="1044.500" cy="747.500" r="4"/></g>
          <path fill="none" stroke="#0f45bd" d="M1107 570.500h16M1107 574.500h16M1107 570.500l3-2.500M1107 570.500l3 2M1123 574.500l-3 2.500M1123 574.500l-3-2"/>
        </svg>
        <div class="navbox d-flex flex-column align-items-center">
          <svg width="31" height="114" viewBox="0 0 31 114"><g fill="none" stroke="#aaa" stroke-width="1.500"><circle cx="26" cy="5" r="3.500"/><path d="M24 3l4 4M28 3l-4 4" stroke-width="1"/><circle cx="26" cy="108" r="3.500"/><path d="M24 108h4" /></g><path fill="#e3e5e8" stroke="#999ea5" d="M4 30a9 9 0 0 1 9-9h9v9a9 9 0 0 1-18 0z"/><circle cx="13" cy="30" r="4.500" fill="#f5f5f5" stroke="#999ea5"/><text x="15" y="42" font-size="9" font-weight="700" fill="#5f8fbe">2D</text><path fill="#888" d="M12 49h6l-3 3zM12 91h6l-3 3z"/><path stroke="#bbb" d="M3 56.500h26"/><path fill="#b5d3a2" stroke="#8fb57a" d="M8 65h10v10H8z"/><circle cx="18" cy="75" r="3.500" fill="#eee" stroke="#999"/><path stroke="#999" stroke-width="2" d="M20 77l4 4"/></svg>
        </div>
      </div>
      <div class="vscroll d-flex flex-column align-items-center"><svg class="mt-2" width="8" height="6" viewBox="0 0 8 6"><path fill="none" stroke="#333" stroke-width="2" d="M0 5l4-4 4 4"/></svg><div class="thumb-bar plan-v w-100"></div><svg class="mt-auto mb-2" width="8" height="6" viewBox="0 0 8 6"><path fill="none" stroke="#333" stroke-width="2" d="M0 1l4 4 4-4"/></svg></div>
    </div>
    <div class="viewctl d-flex align-items-center flex-shrink-0">
      <button class="scale">1 : 100</button>
      <span class="ic"><svg width="15" height="12" viewBox="0 0 15 12"><path fill="#eef" stroke="#333b48" d="M.5 .5h14v11H.5z"/></svg></span>
      <span class="ic"><svg width="15" height="13" viewBox="0 0 15 13"><path fill="#fff" stroke="#333b48" d="M.5 4.500h10v8H.5zM.5 4.500l4-4h10v8l-4 4M10.500 4.500l4-4"/></svg></span>
      <span class="ic"><svg width="15" height="14" viewBox="0 0 15 14"><path stroke="#e09a10" stroke-width="1.500" d="M6 0v13M0 6.500h12M2 2l8 9M10 2L2 11"/><circle cx="6" cy="6.500" r="4" fill="#ffe14a" stroke="#d08a10"/><path stroke="#c01818" stroke-width="2" d="M8 7l6 6M14 7l-6 6"/></svg></span>
      <span class="ic"><svg width="15" height="14" viewBox="0 0 15 14"><circle cx="6" cy="5" r="4.500" fill="#d5ecfb" stroke="#1f6fc0"/><path stroke="#333" stroke-width="1.500" d="M0 12h8"/><path stroke="#c01818" stroke-width="2" d="M8 7l6 6M14 7l-6 6"/></svg></span>
      <span class="ic"><svg width="15" height="14" viewBox="0 0 15 14"><path fill="none" stroke="#2c4f78" stroke-width="1.500" d="M3.500 13V3H14M0 10h3M6 10V6h6v3M10 0v4"/><path stroke="#c01818" stroke-width="2" d="M8 6l6 6M14 6l-6 6"/></svg></span>
      <span class="ic"><svg width="15" height="14" viewBox="0 0 15 14"><path fill="none" stroke="#2c4f78" stroke-width="1.500" d="M3.500 13V3H10M0 10h3M6 10V6h4M6 10h3"/><circle cx="12" cy="5" r="2.500" fill="#d5ecfb" stroke="#1f6fc0"/><path stroke="#1f6fc0" stroke-width="2" d="M12 8v4"/></svg></span>
      <span class="ic"><svg width="16" height="12" viewBox="0 0 16 12"><circle cx="5" cy="9" r="2.500" fill="none" stroke="#333b48"/><circle cx="12" cy="6" r="2.500" fill="none" stroke="#333b48"/><path fill="none" stroke="#333b48" d="M7.500 8l2-1M3 8L0 2l3 0M14 4l-4-4-1 2"/></svg></span>
      <span class="ic"><svg width="8" height="13" viewBox="0 0 8 13"><circle cx="4" cy="4" r="3" fill="#fff" stroke="#1f6fc0" stroke-width="1.300"/><path stroke="#1f6fc0" stroke-width="2" d="M4 8v4"/></svg></span>
      <span class="ic"><svg width="15" height="14" viewBox="0 0 15 14"><path fill="#fff" stroke="#222" stroke-dasharray="2 1" stroke-width="1.500" d="M1 2h12v9H1z"/><circle cx="11" cy="10" r="3" fill="#fff" stroke="#222" stroke-width="1.500"/></svg></span>
      <span class="ic"><svg width="16" height="14" viewBox="0 0 16 14"><path fill="none" stroke="#333b48" d="M3.500 13V3l7-2v8M0 5.500h10M0 9.500h3M6.500 2v6M9.500 2v11"/><path fill="none" stroke="#c33" d="M4 8.500h5M6.500 8v5"/><circle cx="13" cy="6" r="2.500" fill="#d5ecfb" stroke="#1f6fc0"/><path stroke="#1f6fc0" stroke-width="2" d="M13 9v4"/></svg></span>
      <span class="ic"><svg width="16" height="14" viewBox="0 0 16 14"><path fill="none" stroke="#333b48" d="M.5 0v13M15.500 0v6M1 2.500h14"/><path stroke="#777" stroke-dasharray="2 1" d="M1 11.500h7"/><path fill="#555" d="M9 8h7v5H9z"/><path fill="none" stroke="#333" d="M10.500 8V6h4v2"/></svg></span>
      <span class="ic"><svg width="6" height="8" viewBox="0 0 6 8"><path fill="none" stroke="#333" stroke-width="1.800" d="M5 0L1 4l4 4"/></svg></span>
      <div class="flex-fill h-100 d-flex justify-content-center"><div class="thumb-bar plan-h"></div></div>
      <svg width="6" height="8" viewBox="0 0 6 8"><path fill="none" stroke="#333" stroke-width="1.800" d="M1 0l4 4-4 4"/></svg>
      <svg class="grip" width="9" height="9" viewBox="0 0 9 9"><path fill="#aaa" d="M7 0h2v2H7zM7 3h2v2H7zM4 3h2v2H4zM7 6h2v2H7zM4 6h2v2H4zM1 6h2v2H1z"/></svg>
    </div>
  </section>

  <aside class="palette browser d-flex flex-column flex-shrink-0">
    <div class="palette-head d-flex justify-content-between align-items-center"><span>Project Browser - Project1</span><button aria-label="Close browser"><svg width="10" height="10" viewBox="0 0 10 10"><path stroke="#222" stroke-width="1.600" d="M1 1l8 8M9 1L1 9"/></svg></button></div>
    <div class="tree-area d-flex flex-fill overflow-hidden">
      <div class="tree flex-fill" id="tree"></div>
      <div class="vscroll d-flex flex-column align-items-center"><svg class="mt-2" width="8" height="6" viewBox="0 0 8 6"><path fill="none" stroke="#333" stroke-width="2" d="M0 5l4-4 4 4"/></svg><div class="thumb-bar tree-v w-100"></div><svg class="mt-auto mb-1" width="8" height="6" viewBox="0 0 8 6"><path fill="none" stroke="#333" stroke-width="2" d="M0 1l4 4 4-4"/></svg></div>
    </div>
  </aside>
</main>

<footer class="status d-flex align-items-center flex-shrink-0">
  <span class="hint">Click to select, TAB for alternates, CTRL adds, SHIFT unselects.</span>
  <svg width="18" height="18" viewBox="0 0 18 18"><path fill="#fff" stroke="#2c7a1e" stroke-width="1.500" d="M6 7V3l3-2 3 2v4"/><path fill="#9fd0f4" stroke="#1f6fc0" d="M1 9l3-2 4 2v7l-4 1-3-2z"/><path fill="#fff" stroke="#2b4a80" d="M11 8q0-2 2-2t3 2l-1.500 2v6q-1.500 1.500-2 0v-6z"/></svg>
  <span class="sel-wrap ms-2 d-flex"><select class="fake-select" aria-label="Active workset"><option></option></select><svg width="9" height="6" viewBox="0 0 9 6"><path fill="none" stroke="#aaa" stroke-width="1.500" d="M.5 .5l4 4 4-4"/></svg></span>
  <svg class="ms-2" width="16" height="16" viewBox="0 0 16 16"><path fill="#eee" stroke="#999" d="M5 1h9q2 2 0 4H5q-2-2 0-4z"/><path fill="#999" d="M0 16l3-7h3l2 7zM9 6h3l-5 5z"/></svg>
  <span class="zero">:0</span>
  <svg width="16" height="16" viewBox="0 0 16 16"><path fill="#eee" stroke="#333b48" stroke-width="1.500" d="M1 1h14v14H1z"/><path stroke="#333b48" d="M1 3.500h14M6 6.500h7M6 9.500h7M8 12.500h5M3 6.500h1M5 9.500h1"/></svg>
  <svg class="opt-icon" width="16" height="16" viewBox="0 0 16 16"><path fill="#a6a6a6" d="M2 0h14v15H2z"/><path fill="#bbb" stroke="#eee" d="M0 9h5V6l5 5-5 5v-3H0z"/></svg>
  <span class="sel-wrap d-flex"><select class="fake-select" aria-label="Design option"><option>Main Model</option></select><svg width="9" height="6" viewBox="0 0 9 6"><path fill="none" stroke="#aaa" stroke-width="1.500" d="M.5 .5l4 4 4-4"/></svg></span>
  <div class="seltools ms-auto d-flex align-items-center">
    <svg width="16" height="16" viewBox="0 0 16 16"><path fill="none" stroke="#d8a018" stroke-width="2.200" d="M7 4a3 2.500 0 1 0-1 2h5a3 2.500 0 1 0-1-3H5"/><path fill="#fff" stroke="#333" d="M7 4v10l2-2 2 4 2-1-2-4h3z"/></svg>
    <svg width="16" height="16" viewBox="0 0 16 16"><path fill="#d5ecfb" stroke="#1f6fc0" d="M0 13l5-4h10M2 9l5-4h8M4 5l5-4h6M0 13h10"/><path fill="#fff" stroke="#333" d="M9 4v10l2-2 2 4 2-1-2-4h3z"/></svg>
    <svg width="16" height="16" viewBox="0 0 16 16"><path fill="#f0a860" stroke="#b04a10" d="M1 1h9v3H9v4h2v2H0V8h2V4H1z"/><path stroke="#333" d="M6 10v6"/><path fill="#fff" stroke="#333" d="M9 4v10l2-2 2 4 2-1-2-4h3z"/></svg>
    <svg width="16" height="16" viewBox="0 0 16 16"><path fill="#a8d3f2" stroke="#1468b0" d="M1 3l8-2v12l-8 2z"/><path fill="#fff" stroke="#333" d="M8 4v10l2-2 2 4 2-1-2-4h3z"/></svg>
    <svg width="16" height="16" viewBox="0 0 16 16"><path fill="none" stroke="#222" stroke-width="1.300" d="M5 0v9M0 4.500h10M3.500 1.500L5 0l1.500 1.500M3.500 7.500L5 9l1.500-1.500"/><path fill="#fff" stroke="#333" d="M9 5v10l2-2 2 3 2-1-2-3h3z"/></svg>
    <svg width="16" height="16" viewBox="0 0 16 16"><circle cx="8" cy="8" r="5.500" fill="none" stroke="#a2a2a2" stroke-width="3" stroke-dasharray="3 1.500"/></svg>
    <svg width="16" height="16" viewBox="0 0 16 16"><path fill="#9aa5b1" stroke="#444f5c" d="M.5 1.500h15L10 8v6l-3 1.500V8z"/></svg>
  </div><span class="sel-count">:1</span>
</footer>

<div class="taskbar d-flex flex-shrink-0">
  <button class="app" aria-label="Start"><svg width="16" height="16" viewBox="0 0 16 16"><path fill="#fff" d="M0 2l7-1v6.500H0zM8 1l8-1v7.500H8zM0 8.500h7V15l-7-1zM8 8.500h8V16l-8-1z"/></svg></button>
  <div class="search d-flex align-items-center"><svg class="ms-2 ps-1" width="20" height="18" viewBox="0 0 20 18"><circle cx="12" cy="7" r="5.500" fill="none" stroke="#222" stroke-width="1.400"/><path stroke="#222" stroke-width="1.400" d="M8 11l-6 6"/></svg><input type="text" placeholder="Type here to search" aria-label="Search"></div>
  <button class="app" aria-label="Task View"><svg width="16" height="16" viewBox="0 0 16 16"><path fill="none" stroke="#fff" stroke-width="1.300" d="M1 4h9v8H1zM1 0v2h9V0M1 16v-2h9v2M14 0v4M14 8v8"/><path fill="#fff" d="M13 4.500h2.500v3H13z"/></svg></button>
  <button class="app" aria-label="File Explorer"><svg width="22" height="18" viewBox="0 0 22 18"><path fill="#e8a91c" d="M0 0h8l2 2h11v4H0z"/><path fill="#fbd667" d="M0 4h21v13H0z"/><path fill="#3f9be0" d="M4 18v-7h13v7h-4v-4H8v4z"/></svg></button>
  <button class="app run" aria-label="Edge"><svg width="24" height="24" viewBox="0 0 24 24"><circle cx="13" cy="12" r="11" fill="#1273c4"/><path fill="#4cc36b" d="M3 8Q6 1 13 1q10 0 11 9 0 6-8 6-4 0-2-4 0-5-6-5-3 0-5 1z"/><path fill="#35b8e8" d="M3 8Q6 1 13 1q5 0 8 3-9-2-18 4z"/><path fill="#0b3f7a" d="M9 12q0 8 9 9 3-1 4-3-7 1-9-6z"/><path fill="#e8971e" d="M1 14h12v9H1z"/><path stroke="#7a4a00" d="M5 14v-2h4v2M1 18h12" fill="none"/></svg></button>
  <button class="app run" aria-label="Teams"><svg width="24" height="24" viewBox="0 0 24 24"><circle cx="13" cy="4" r="4" fill="#7b83eb"/><circle cx="20" cy="6" r="3" fill="#5059c9"/><path fill="#7b83eb" d="M6 9h13v8a6 6 0 0 1-13 0z"/><path fill="#5059c9" d="M18 10h6v6q-1 4-5 4z"/><rect y="6" width="12" height="12" rx="1" fill="#4b53bc"/><path stroke="#fff" stroke-width="2" d="M3 9.500h6M6 9.500v6"/><circle cx="19" cy="19" r="4.500" fill="#c50f1f" stroke="#fff"/></svg></button>
  <button class="app run" aria-label="Outlook"><svg width="24" height="22" viewBox="0 0 24 22"><path fill="#1490df" d="M8 0h14v10H8z"/><path fill="#28a8ea" d="M15 0h7v6h-7z"/><path fill="#0a4f93" d="M7 9h17v12H7z"/><path fill="#35b8f1" d="M7 21l17-11v11z"/><rect y="5" width="12" height="12" rx="1" fill="#0f6cbd"/><circle cx="6" cy="11" r="3" fill="none" stroke="#fff" stroke-width="2"/></svg></button>
  <button class="app run cur" aria-label="Revit"><svg width="24" height="24" viewBox="0 0 24 24"><path fill="#e2edf7" d="M0 0h24v24H0z"/><path fill="#1b5a9e" d="M6 3h8q5 0 5 5 0 3-3 4l4 9h-4l-3-8h-3v8H6z"/><path fill="#e2edf7" d="M10 6h3q2 0 2 2t-2 2h-3z"/><path fill="#4a94d4" d="M6 3h3v18H6z"/></svg></button>
  <button class="app run" aria-label="Snipping Tool"><svg width="26" height="24" viewBox="0 0 26 24"><ellipse cx="10" cy="13" rx="9" ry="7" fill="#b8b8b8"/><ellipse cx="12" cy="8" rx="10" ry="7" fill="#f5f5f5" stroke="#c9302c" stroke-width="1.500"/><path stroke="#999" stroke-width="1.500" d="M9 6l9 10M17 4l-4 11"/><circle cx="15" cy="18" r="2.500" fill="none" stroke="#1f7fd4" stroke-width="2"/><circle cx="21" cy="17" r="2.500" fill="none" stroke="#1f7fd4" stroke-width="2"/></svg></button>
  <div class="tray ms-auto d-flex align-items-center">
    <span class="tray-ic help"><svg width="25" height="24" viewBox="0 0 25 24"><circle cx="11.500" cy="11.500" r="10.500" fill="#1a8fd0" stroke="#fff" stroke-width="2"/><path fill="none" stroke="#fff" stroke-width="2.500" d="M8 8.500q0-3 3.500-3T15 8.500q0 2-3.500 3.500v2M11.500 15.500v2.500"/><circle cx="19.500" cy="17.500" r="5" fill="#e0202a"/><path stroke="#fff" stroke-width="1.500" d="M19.500 14.500v3.500M19.500 19v1.500"/></svg></span>
    <span class="tray-ic"><svg width="12" height="7" viewBox="0 0 12 7"><path fill="none" stroke="#fff" stroke-width="1.300" d="M0 6l6-5 6 5"/></svg></span>
    <span class="tray-ic"><svg width="8" height="17" viewBox="0 0 8 17"><path fill="#111" stroke="#555" d="M1 1h6v15H1z"/><path fill="#e33b1c" d="M1.500 1.500h5v4h-5z"/><path stroke="#aaa" d="M2 8h4M2 11h3M2 14h3"/></svg></span>
    <span class="tray-ic"><svg width="17" height="11" viewBox="0 0 17 11"><path fill="#1f88e0" d="M4 11a4 4 0 0 1 0-7 5 5 0 0 1 9 0 3.500 3.500 0 0 1 1 7z"/></svg></span>
    <span class="tray-ic"><svg width="16" height="10" viewBox="0 0 16 10"><path fill="none" stroke="#fff" d="M.5 .5h13v9H.5zM15 3v4"/><path fill="#fff" d="M2 2h5v6H2z"/></svg></span>
    <span class="tray-ic"><svg width="14" height="13" viewBox="0 0 14 13"><g fill="none" stroke="#ccc" stroke-width="1.300"><path d="M1 13Q1 2 13 1M4 13q0-8 9-9M7 13q0-5 6-6"/></g><circle cx="11" cy="11.500" r="1.500" fill="#fff"/></svg></span>
    <span class="tray-ic"><svg width="17" height="14" viewBox="0 0 17 14"><path fill="none" stroke="#fff" stroke-width="1.200" d="M1 5h2l4-4v12L3 9H1zM9 5q1 2 0 4M11.500 3q2.500 4 0 8"/><path fill="none" stroke="#888" d="M14 1q4 6 0 12"/></svg></span>
    <div class="clock">10:39<br>06/10/2023</div>
  </div>
</div>

<script>
// Property grid: strings are group headings, arrays are [label, value, mode]
const props = ['Constraints',['Vertical Profile Offset','0.0','edit'],['Horizontal Profile Offset','-200.0'],'Structural',['Rebar Cover','XD1\\XC3/4 (C32/40,0.55,3...'],'Dimensions',['Length','4500.0','ro'],['Volume','0.608 m<sup>3</sup>','ro'],'Identity Data',['Image',''],['Comments',''],['Mark',''],'Phasing',['Phase Created','New Construction'],['Phase Demolished','None'],'Profile',['Angle','0.00°']];
const chev = '<svg width="7" height="9" viewBox="0 0 7 9"><path fill="none" stroke="#000" stroke-width="1.300" d="M.5 4l3-3 3 3M.5 8l3-3 3 3"/></svg>';
document.getElementById('props').innerHTML = props.map((p,i) => typeof p === 'string'
  ? `<tr class="grp"><th colspan="3"><div class="d-flex justify-content-between align-items-center">${p}${chev}</div></th></tr>`
  : `<tr class="itm ${p[2]==='ro'?'ro':''}"><th><label for="p${i}">${p[0]}</label></th><td class="${p[2]==='edit'?'edit':''}">${p[2]==='ro'?`<output id="p${i}">${p[1]}</output>`:`<input id="p${i}" value="${p[1]}">`}</td><td></td></tr>`).join('');

// Browser tree: [depth, label, state] with state + collapsed, - expanded, . leaf, * selected leaf
const icons = {
  Legends:'<path fill="#fff" stroke="#333b48" d="M.5 .5h15v15H.5z"/><path fill="#333b48" d="M0 0h16v4H0zM3 6h3v3H3zM3 11h3v3H3z"/><path stroke="#333b48" stroke-dasharray="2 1" d="M8 6.500h6M8 9.500h6M8 12.500h6"/>',
  Sched:'<path fill="#fff" stroke="#333b48" d="M.5 2.500h15v12H.5z"/><path fill="#333b48" d="M0 2h16v3H0z"/><path stroke="#777" d="M1 8.500h14M1 11.500h14M5.500 5v9M10.500 5v9"/>',
  Sheets:'<path fill="#fff" stroke="#333b48" d="M.5 2.500h11l4 4v8H.5z"/><path fill="none" stroke="#333b48" d="M2.500 5.500h7v7M2.500 8.500h4v4h-4zM12.500 7v6"/>',
  Families:'<path fill="#fff" stroke="#333b48" d="M1.500 1.500h7v7h-7zM10.500 1.500h5v14h-14v-5h9z"/>'};
const T = [[2,'North','.'],[2,'South','.'],[2,'West','.',1],[0,'Legends','.'],[0,'Schedules/Quantities (all)','+'],[0,'Sheets (all)','.'],[0,'Families','-']];
'Analytical Links|Annotation Symbols|Boundary Conditions|Cable Trays|Ceilings|Conduits|Curtain Panels|Curtain Systems|Curtain Wall Mullions|Detail Items|Division Profiles|Doors|Duct Systems|Ducts|Flex Ducts|Flex Pipes|Floors|Pattern|Pipes|Piping Systems'.split('|').forEach(t=>T.push([1,t,'+']));
T.push([1,'Profiles','-']);
'Corus-ComFlor 46|Corus-ComFlor 51|Corus-ComFlor 70|M_Rectangular Handrail|M_Reveal-Brick Course|M_Roof Deck'.split('|').forEach(t=>T.push([2,t,'+']));
T.push([2,'M_Slab Edge-Thickened','-'],[3,'600 x 300mm','*'],[3,'900 x 300mm','.'],[3,'900 x 450mm','.',1],[2,'M_Stair Nosing - Radius','+'],[2,'UB-Universal Beams-Profile','+',1]);
'Railings|Ramps|Roofs|Site|Stairs|Structural Beam Systems'.split('|').forEach(t=>T.push([1,t,'+']));
document.getElementById('tree').innerHTML = T.map(([d,t,s,last],i)=>{
  let g='';
  for(let k=0;k<d;k++) g+=`<span class="guide ${i<3&&k===1?'':'vl'}"></span>`;
  const box = s==='+'?'<span class="box plus"></span>':s==='-'?'<span class="box"></span>':'';
  const ic = d===0?`<svg class="me-1" width="16" height="16" viewBox="0 0 16 16">${icons[t.slice(0,5)==='Sched'?'Sched':t.slice(0,6)==='Sheets'?'Sheets':t]}</svg>`:'';
  return `<div class="trow">${g}<span class="node ${d===0?'root':''} vl ${last?'half':''}">${box}</span>${ic}<span class="${s==='*'?'tsel':''}${d===0?'ps-1':''}">${t}</span></div>`;
}).join('');

// Concrete hatch: rows of short dashes plus scattered aggregate flecks
const dash = {103:[112,206,442,583,724],148:[253,394,535,818],196:[64,206,347,628,770,865],244:[159,441,583,677],289:[253,394,488,724,865],337:[64,206,299,535,677,818],385:[112,347,488,630],430:[159,299,441,724,865],478:[253,394,535,677,770],526:[64,347,488,583,818],571:[159,441,583,724],619:[112,441,583,724],667:[253,394,535,818],715:[64,206,347,630,770,865],760:[159,441,583,677],808:[253,394,488,724,865],856:[64,206,299,535,677,818],901:[112,347,488,630],949:[159,299,441,770],997:[112,253,535,677,770],1042:[64,347,488,630,865],1090:[159,441,583,770]};
const fleck = [171,70,196,83,236,87,340,81,404,97,69,117,447,119,469,116,214,147,321,150,113,157,150,165,177,175,84,183,463,184,400,200,306,210,336,217,370,227,475,221,142,269,183,280,78,287,249,276,248,297,394,305,457,285,312,315,160,333,166,344,96,351,264,342,440,349,410,370,149,407,282,405,318,420,212,426,384,437,447,454,90,456,195,463,91,498,299,482,340,491,447,498,106,521,154,512,211,527,285,548,350,565,357,558,453,560,461,563,293,576,229,590,224,636,141,650,291,654,143,684,288,679,392,685,418,686,159,714,126,747,304,744,192,765,240,761,297,758,175,778,409,750,361,776,424,792,427,812,279,823,70,835,87,837,133,852,235,865,339,871,262,887,326,905,431,898,105,900,251,931,357,936,186,947,139,957,123,965,204,975,268,993,414,963,440,981,372,1002,123,1021,180,1053,396,1023,285,1059,104,1086,274,1098,
640,69,552,126,597,150,697,156,662,168,766,160,804,162,830,178,570,190,895,195,715,218,750,225,818,228,538,237,651,237,602,255,586,255,902,273,732,290,837,291,796,306,901,300,499,311,644,342,750,348,611,360,504,366,516,376,674,376,884,366,895,378,662,406,739,396,768,412,592,423,598,423,865,428,533,441,849,461,784,477,575,489,745,501,640,507,809,516,872,534,697,534,592,528,517,576,609,593,714,600,711,628,859,630,879,639,774,645,796,646,730,664,480,627,587,699,539,715,643,722,652,717,860,701,716,733,789,751,895,757,571,763,845,768,555,779,660,786,490,798,806,816,553,828,741,834,617,844,723,838,677,852,788,855,852,872,706,903,589,909,494,914,560,933,735,939,840,945,502,966,607,972,688,966,857,978,753,985,753,1001,857,1008,688,1020,567,1038,625,1036,631,1056,841,1044,694,1071,874,1074,537,1096,546,1100];
let d='';
for(const y in dash) dash[y].forEach(x=>d+=`M${x-5} ${y}h9`);
for(let i=0;i<fleck.length;i+=2) d+= i%3 ? `M${fleck[i]-1} ${fleck[i+1]-3}l3 6` : `M${fleck[i]+1} ${fleck[i+1]-3}l-3 6`;
document.getElementById('marks').setAttribute('d',d);
</script>
<script src="https://cdn.jsdelivr.net/npm/bootstrap@5.3.0/dist/js/bootstrap.bundle.min.js"></script>
</body>
</html>
